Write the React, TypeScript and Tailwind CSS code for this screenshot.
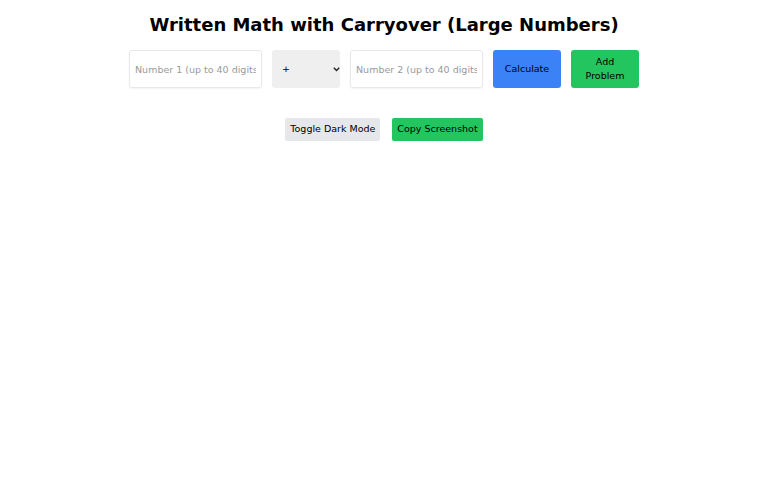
import React from "react";

export default function App() {
  return (
    <div className="min-h-[480px] bg-white pt-[12px]" style={{ fontFamily: '"DejaVu Sans", sans-serif' }}>
      <h1 className="text-center text-[18px] font-bold leading-[26px] text-black">
        Written Math with Carryover (Large Numbers)
      </h1>
      <div className="mt-[12px] flex justify-center gap-[10px]">
        <input
          className="h-[38px] w-[133px] rounded-[3px] border border-[#e8e8e8] px-[5px] text-[9.5px] shadow-[0_1px_2px_rgba(0,0,0,0.05)] placeholder:text-[#9a9a9a] outline-none"
          placeholder="Number 1 (up to 40 digits)"
        />
        <div className="relative h-[38px] w-[68px]">
          <select className="h-full w-full appearance-none rounded-[3px] bg-[#efefef] pl-[10px] text-[9.5px] text-black outline-none">
            <option>+</option>
          </select>
          <svg
            className="pointer-events-none absolute left-[61px] top-[17px]"
            width="7"
            height="5"
            viewBox="0 0 7 5"
            fill="none"
            stroke="#222"
            strokeWidth="1.4"
          >
            <path d="M0.8 0.8 L3.5 3.6 L6.2 0.8" />
          </svg>
        </div>
        <input
          className="h-[38px] w-[133px] rounded-[3px] border border-[#e8e8e8] px-[5px] text-[9.5px] shadow-[0_1px_2px_rgba(0,0,0,0.05)] placeholder:text-[#9a9a9a] outline-none"
          placeholder="Number 2 (up to 40 digits)"
        />
        <button className="h-[38px] w-[68px] rounded-[3px] bg-[#3b82f6] text-[9.5px] text-black">Calculate</button>
        <button className="h-[38px] w-[68px] rounded-[3px] bg-[#22c55e] text-[9.5px] leading-[14px] text-black">
          Add
          <br />
          Problem
        </button>
      </div>
      <div className="mt-[30px] flex justify-center gap-[12px]">
        <button className="h-[23px] rounded-[2px] bg-[#e5e7eb] px-[5px] text-[9.5px] text-black">Toggle Dark Mode</button>
        <button className="h-[23px] rounded-[2px] bg-[#22c55e] px-[5px] text-[9.5px] text-black">Copy Screenshot</button>
      </div>
    </div>
  );
}
